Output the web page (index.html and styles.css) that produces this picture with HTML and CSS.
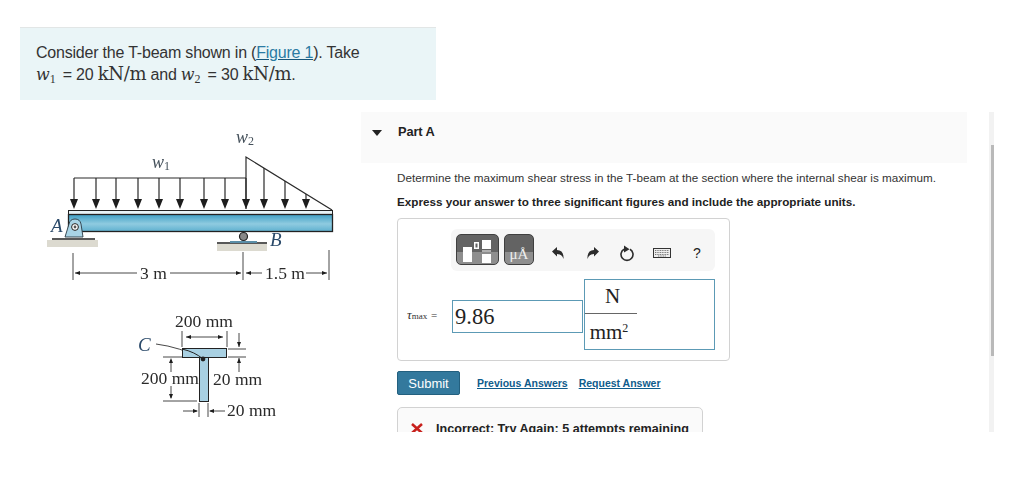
FILE: index.html
```html
<!DOCTYPE html>
<html lang="en">
<head>
<meta charset="utf-8">
<title>T-beam problem</title>
<link rel="stylesheet" href="styles.css">
</head>
<body>
<section class="statement">
  <p class="line">Consider the T-beam shown in (<a class="fig-link" href="#">Figure 1</a>). Take</p>
  <p class="line"><i class="mvar">w</i><sub class="msub">1</sub> = 20 <span class="munit">kN/m</span> and <i class="mvar">w</i><sub class="msub">2</sub> = 30 <span class="munit">kN/m</span>.</p>
</section>
<div class="row">
  <svg class="figure" width="361" height="320" viewBox="0 112 361 320">
    <g class="strokes">
      <path d="M74 178H246M246 209V157L332 210"/>
      <path d="M74 178V205M96 178V205M116 178V205M138 178V205M159 178V205M180 178V205M204 178V205M225 178V205M246 178V205M264 168V205M285 181V205M306 194V205"/>
    </g>
    <path class="heads" d="M70 199H78L74 209ZM92 199H100L96 209ZM112 199H120L116 209ZM134 199H142L138 209ZM155 199H163L159 209ZM176 199H184L180 209ZM200 199H208L204 209ZM221 199H229L225 209ZM242 199H250L246 209ZM260 199H268L264 209ZM281 199H289L285 209ZM302 199H310L306 209Z"/>
    <defs>
      <linearGradient id="beam" x1="0" y1="0" x2="0" y2="1">
        <stop offset="0" stop-color="#3f9fc4"/>
        <stop offset="0.55" stop-color="#8fcbe0"/>
        <stop offset="1" stop-color="#5fb0cf"/>
      </linearGradient>
    </defs>
    <rect class="beam-top" x="68.5" y="210.5" width="264" height="4"/>
    <rect class="beam-body" x="68.5" y="214.5" width="264" height="17" fill="url(#beam)"/>
    <rect class="ground" x="47" y="240" width="51" height="7"/>
    <rect class="ground" x="217" y="244" width="50" height="7"/>
    <path class="pin" d="M65 237L69 224Q70 219 75 219Q80 219 81 224L83 237Z"/>
    <circle class="pin-hole" cx="75" cy="227" r="3.4"/>
    <circle class="pin-dot" cx="75" cy="227" r="1.4"/>
    <path class="plate" d="M52 239H95M217 243H267"/>
    <rect class="plate-fill" x="230" y="241" width="27" height="2"/>
    <circle class="roller" cx="243.500" cy="236.500" r="4"/>
    <g class="thin">
      <path d="M73 253V280M243 252V280M329 250V280"/>
      <path d="M75 273H137M170 273H241M246 273H262M306 273H327"/>
      <path d="M182 331V347M227 331V347M186 337H223M239 333V347M239 372V358M228 349H246M228 357H246"/>
      <path d="M163 357H182M163 401H197M171 360V372M171 386V398M199 403V417M208 403V417M183 411H197M210 411H225"/>
      <path d="M156 344Q180 347 203 359"/>
    </g>
    <path class="heads" d="M75 273L80 271V275ZM241 273L236 271V275ZM246 273L251 271V275ZM327 273L322 271V275ZM186 337L191 335V339ZM223 337L218 335V339ZM239 347L237 342H241ZM239 358L237 363H241ZM171 358L169 363H173ZM171 399L169 394H173ZM198 411L193 409V413ZM209 411L214 409V413Z"/>
    <rect class="t-fill" x="182.500" y="348.500" width="44" height="9"/>
    <rect class="t-fill" x="199.500" y="357.500" width="9" height="44"/>
    <path class="leader" d="M182 349Q195 352 203 359"/>
    <circle class="dot" cx="203" cy="359" r="2.4"/>
    <text class="lbl var" x="152" y="168">w<tspan class="low" dy="2">1</tspan></text>
    <text class="lbl var" x="236" y="143">w<tspan class="low" dy="2">2</tspan></text>
    <text class="lbl ital" x="51" y="232">A</text>
    <text class="lbl ital" x="270" y="246">B</text>
    <text class="lbl" x="140" y="279">3 m</text>
    <text class="lbl" x="265" y="279">1.5 m</text>
    <text class="lbl" x="175" y="327">200 mm</text>
    <text class="lbl ital" x="138" y="351">C</text>
    <text class="lbl" x="141" y="384">200 mm</text>
    <text class="lbl" x="213" y="385">20 mm</text>
    <text class="lbl" x="227" y="416">20 mm</text>
  </svg>
  <main class="part">
    <header class="part-head">
      <span class="caret"></span>
      <h2 class="part-title">Part A</h2>
    </header>
    <div class="part-body">
      <p class="desc">Determine the maximum shear stress in the T-beam at the section where the internal shear is maximum.</p>
      <p class="instr">Express your answer to three significant figures and include the appropriate units.</p>
      <div class="answer">
        <div class="toolbar">
          <div class="tpl tpl-wide">
            <svg width="43" height="31" viewBox="0 0 43 31">
              <rect class="tpl-w" x="7" y="13" width="9" height="15"/>
              <rect class="tpl-w" x="18" y="8" width="5" height="7"/>
              <rect class="tpl-d" x="19.500" y="9.500" width="2" height="4"/>
              <rect class="tpl-w" x="26" y="6" width="9" height="9"/>
              <rect class="tpl-w" x="26" y="16.500" width="9" height="1"/>
              <rect class="tpl-w" x="26" y="20" width="9" height="9"/>
            </svg>
          </div>
          <div class="tpl tpl-unit">
            <span class="unit-glyph">μÅ</span>
          </div>
          <div class="tools">
            <svg class="tool" width="14" height="14" viewBox="0 0 14 14"><path class="icon-fill" d="M1 5.500L6 1V4Q13 4 12.500 13Q11 8 6 8V10.500Z"/></svg>
            <svg class="tool" width="14" height="14" viewBox="0 0 14 14"><path class="icon-fill" d="M13 5.500L8 1V4Q1 4 1.500 13Q3 8 8 8V10.500Z"/></svg>
            <svg class="tool" width="16" height="17" viewBox="0 0 16 17"><path class="icon-line" d="M5 4.200A6 6 0 1 0 11 4.200"/><path class="icon-fill" d="M5 0.500L10.500 4.200L5 7.500Z"/></svg>
            <svg class="tool" width="18" height="10" viewBox="0 0 18 10"><rect class="kbd" x="0.500" y="0.500" width="17" height="9"/><path class="kbd-keys" d="M2 2.500H16M2 4.500H16M2 6.500H16M5 8H13"/></svg>
            <span class="help">?</span>
          </div>
        </div>
        <div class="entry">
          <span class="sym"><i class="tau">τ</i><span class="tau-sub">max</span> =</span>
          <div class="value-box">9.86</div>
          <div class="unit-box">
            <div class="frac">
              <span class="num">N</span>
              <span class="den">mm<sup class="pow">2</sup></span>
            </div>
          </div>
        </div>
      </div>
      <div class="actions">
        <button class="submit" type="button">Submit</button>
        <a class="act-link" href="#">Previous Answers</a>
        <a class="act-link" href="#">Request Answer</a>
      </div>
      <div class="feedback">
        <svg class="x-mark" width="12" height="11" viewBox="0 0 12 11"><path d="M1 1L11 10M11 1L1 10"/></svg>
        <span class="fb-text">Incorrect; Try Again; 5 attempts remaining</span>
      </div>
    </div>
  </main>
  <div class="scrollbar"><div class="thumb"></div></div>
</div>
</body>
</html>
```

FILE: styles.css
```css
* { box-sizing: border-box; }
html, body { margin: 0; padding: 0; background: #fff; }
body { font-family: "Liberation Sans", Arial, sans-serif; color: #333; height: 499px; overflow: hidden; }

.statement {
  margin: 27px 0 12px 20px;
  width: 416px;
  height: 73px;
  padding: 14px 16px 0;
  background: #eaf5f7;
  border-top: 1px solid #e2e6e6;
  font-size: 16px;
  line-height: 21px;
}
.line { margin: 0; white-space: nowrap; letter-spacing: -0.210px; }
.fig-link { color: #2b7ba3; text-decoration: underline; text-decoration-color: #17567a; }
.mvar { font-family: "DejaVu Serif", "Liberation Serif", serif; font-size: 16px; letter-spacing: 0; }
.msub { font-family: "Liberation Serif", serif; font-size: 12px; line-height: 0; vertical-align: -3px; margin-right: 3px; }
.munit { font-family: "DejaVu Serif", "Liberation Serif", serif; font-size: 18px; letter-spacing: -0.300px; }

.row { display: flex; align-items: flex-start; }
.figure { display: block; flex: none; filter: blur(0.45px); }

.strokes path { fill: none; stroke: #2a2a2a; stroke-width: 1.2; }
.heads { fill: #1d1d1d; }
.beam-top { fill: #e8f3f6; stroke: #222; stroke-width: 1; }
.beam-body { stroke: #222; stroke-width: 1.3; }
.ground { fill: #dcdad0; }
.pin { fill: #a9d4e6; stroke: #2a3a44; stroke-width: 0.9; }
.pin-hole { fill: #fff; stroke: #222; stroke-width: 1; }
.pin-dot { fill: #555; }
.plate { fill: none; stroke: #222; stroke-width: 1.6; }
.plate-fill { fill: #5a8ea8; }
.roller { fill: #888; stroke: #222; stroke-width: 1.2; }
.thin path { fill: none; stroke: #333; stroke-width: 0.9; }
.t-fill { fill: #a8d0e2; stroke: #222; stroke-width: 1; }
.leader { fill: none; stroke: #222; stroke-width: 1; }
.dot { fill: #222; }
.lbl { font-family: "Liberation Serif", serif; font-size: 17.500px; fill: #2a2a2a; }
.ital { font-style: italic; fill: #2b4a6a; font-size: 19px; }
.var { font-style: italic; fill: #44505a; font-size: 18px; }
.low { font-style: normal; font-size: 12px; }

.part { width: 606px; height: 320px; overflow: hidden; flex: none; }
.part-head {
  height: 51px;
  background: #fafafa;
  display: flex;
  align-items: flex-start;
  padding: 12px 0 0 11px;
}
.caret {
  width: 0;
  height: 0;
  margin-top: 6px;
  border-left: 5px solid transparent;
  border-right: 5px solid transparent;
  border-top: 6px solid #222;
}
.part-title { margin: 0 0 0 16px; font-size: 12.800px; line-height: 15px; font-weight: bold; color: #222; letter-spacing: -0.100px; }
.part-body { padding: 8px 0 0 36px; }
.desc { margin: -1px 0 0; font-size: 11.700px; line-height: 15px; color: #333; white-space: nowrap; }
.instr { margin: 9px 0 0; font-size: 11.700px; line-height: 15px; font-weight: bold; color: #222; white-space: nowrap; }

.answer {
  margin-top: 9px;
  width: 333px;
  height: 143px;
  padding: 10px 15px 0 10px;
  border: 1px solid #d2d2d2;
  border-radius: 4px;
}
.toolbar {
  margin-left: 43px;
  width: 264px;
  height: 42px;
  padding: 5px 0 0 5px;
  background: #f6f6f6;
  border-radius: 6px;
  display: flex;
  align-items: flex-start;
  gap: 5px;
}
.tpl {
  height: 31px;
  border-radius: 5px;
  border: 1px solid #3f3f3f;
  background: linear-gradient(#636363 0 60%, #8e8e8e 60% 100%);
  overflow: hidden;
  flex: none;
}
.tpl svg { display: block; margin: -1px; }
.tpl-wide { width: 43px; }
.tpl-unit { width: 30px; display: flex; align-items: flex-end; justify-content: center; }
.tpl-w { fill: #fff; }
.tpl-d { fill: #636363; }
.unit-glyph { font-family: "Liberation Serif", serif; font-size: 15px; line-height: 20px; color: #eee; }
.tools { display: flex; align-items: center; height: 38px; margin-left: 12px; flex: 1; }
.tool { display: block; flex: none; }
.tools .tool:nth-child(1) { margin-right: 21px; }
.tools .tool:nth-child(2) { margin-right: 19px; }
.tools .tool:nth-child(3) { margin-right: 18px; }
.tools .tool:nth-child(4) { margin-right: 22px; }
.icon-fill { fill: #2c2c2c; }
.icon-line { fill: none; stroke: #2c2c2c; stroke-width: 1.600; }
.kbd { fill: #eee; stroke: #333; stroke-width: 1; }
.kbd-keys { fill: none; stroke: #666; stroke-width: 0.900; stroke-dasharray: 1 0.700; }
.help { font-size: 14px; line-height: 16px; color: #222; }

.entry {
  display: flex;
  align-items: center;
  margin-top: 8px;
  height: 71px;
}
.sym { width: 44px; margin-left: -1px; flex: none; font-family: "Liberation Serif", serif; font-size: 11px; color: #333; white-space: nowrap; margin-top: 1px; }
.tau { font-size: 13px; }
.tau-sub { font-size: 9px; margin-right: 1px; }
.value-box {
  width: 131px;
  height: 33px;
  margin-top: 4px;
  margin-left: 1px;
  border: 1px solid #5c9ab5;
  padding-left: 2px;
  font-family: "Liberation Serif", serif;
  font-size: 22.500px;
  line-height: 31px;
  color: #222;
  flex: none;
}
.unit-box {
  width: 131px;
  height: 71px;
  margin-left: 1px;
  border: 1px solid #5c9ab5;
  flex: none;
}
.frac {
  width: 52px;
  display: flex;
  flex-direction: column;
  align-items: center;
  font-family: "Liberation Serif", serif;
  font-size: 21px;
  color: #222;
}
.num { height: 34px; line-height: 32px; width: 100%; padding-left: 3px; text-align: center; border-bottom: 1px solid #666; }
.den { line-height: 37px; margin-left: -4px; }
.pow { font-size: 12px; line-height: 0; vertical-align: 7px; }

.actions { display: flex; align-items: center; margin-top: 10px; height: 24px; }
.submit {
  width: 63px;
  height: 24px;
  padding: 0;
  background: #33799d;
  border: 1px solid #23607f;
  border-radius: 2px;
  color: #fff;
  font-family: "Liberation Sans", Arial, sans-serif;
  font-size: 13px;
}
.act-link { font-size: 10.500px; font-weight: bold; color: #0f5c8c; text-decoration: underline; margin-left: 11px; white-space: nowrap; }
.submit + .act-link { margin-left: 17px; }

.feedback {
  margin-top: 12px;
  width: 306px;
  height: 40px;
  border: 1px solid #d2d2d2;
  border-radius: 5px;
  background: #fafafa;
  padding: 14px 0 0 13px;
  display: flex;
  align-items: flex-start;
}
.x-mark { flex: none; margin-top: 1px; }
.x-mark path { fill: none; stroke: #c8201c; stroke-width: 2.600; }
.fb-text { margin-left: 13px; font-size: 12.600px; line-height: 14px; font-weight: bold; color: #222; white-space: nowrap; }

.scrollbar { width: 5px; height: 320px; margin-left: 22px; padding-top: 33px; padding-left: 2px; background: #f2f2f2; flex: none; }
.thumb { width: 3px; height: 211px; background: #b9b9b9; }
```
